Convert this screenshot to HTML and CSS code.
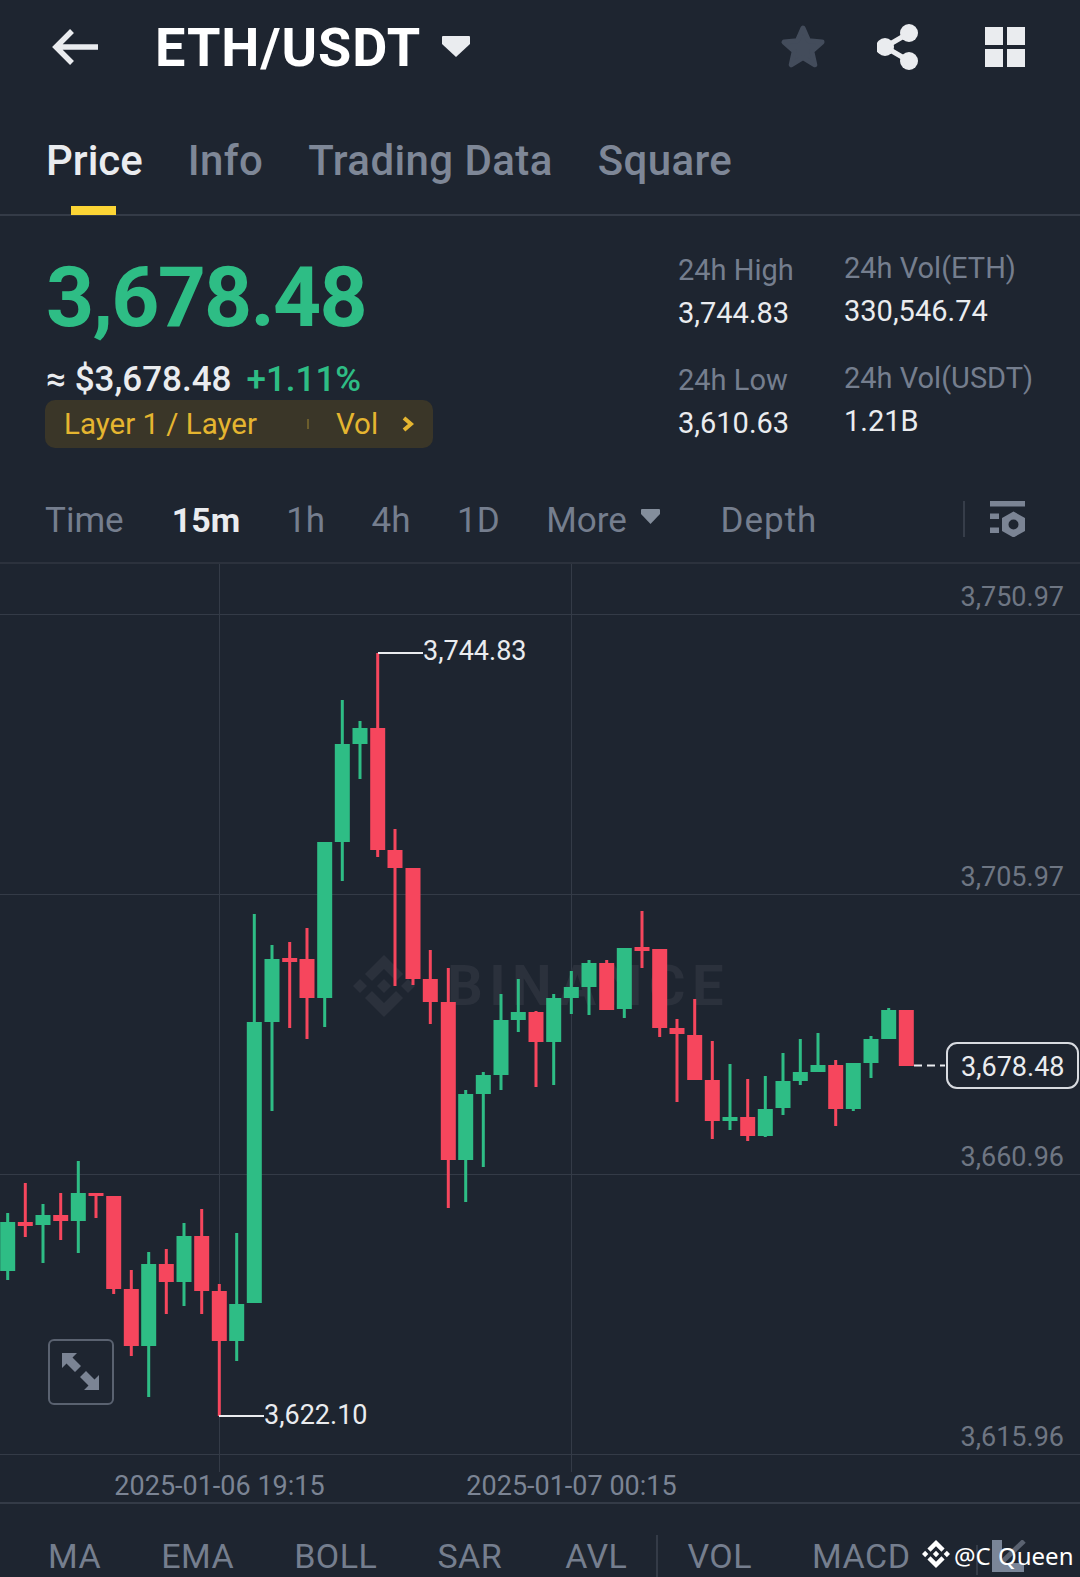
FILE: index.html
```html
<!DOCTYPE html>
<html>
<head>
    <title>ETH/USDT</title>
    <link rel="stylesheet" href="styles.css">
</head>
<body>
    <svg class="hidden-defs" width="0" height="0">
        <symbol id="bnb-logo" viewBox="0 0 32 32">
            <path d="M9.79 13.44 16 7.23l6.21 6.22 3.61-3.61L16 0 6.18 9.82z"/>
            <path d="M0 16l3.61-3.61L7.22 16l-3.61 3.61z"/>
            <path d="M9.79 18.56 16 24.77l6.21-6.21 3.61 3.6L16 32l-9.82-9.82z"/>
            <path d="M24.78 16l3.61-3.61L32 16l-3.61 3.61z"/>
            <path d="M19.66 16 16 12.34 12.34 16 16 19.66z"/>
        </symbol>
    </svg>

    <div class="top-bar">
        <svg class="back-icon" width="48" height="40" viewBox="0 0 48 40">
            <path d="M46 20H5M20 4 4 20l16 16"/>
        </svg>
        <div class="pair">ETH/USDT</div>
        <svg class="pair-caret" width="28" height="21" viewBox="0 0 28 21">
            <path d="M1 0h26a1 1 0 0 1 1 1v7L14 21 0 8V1a1 1 0 0 1 1-1z"/>
        </svg>
        <div class="top-icons">
            <svg width="46" height="46" viewBox="0 0 46 46">
                <path class="star" d="M23 4l5.6 12.8 13.4 1.3-10.2 9.1 3 13.6L23 33.7 11.200 40.800l3-13.600L4 18.100l13.400-1.300z"/>
            </svg>
            <svg width="44" height="46" viewBox="0 0 44 46">
                <path class="share-line" d="M32 9 8 23l24 14"/>
                <circle class="icon-fill" cx="32" cy="9" r="9"/>
                <circle class="icon-fill" cx="8" cy="23" r="9"/>
                <circle class="icon-fill" cx="32" cy="37" r="9"/>
            </svg>
            <svg class="grid-icon" width="40" height="40" viewBox="0 0 40 40">
                <path class="icon-fill" d="M0 0h18v18H0zM22 0h18v18H22zM0 22h18v18H0zM22 22h18v18H22z"/>
            </svg>
        </div>
    </div>

    <div class="tabs">
        <div class="tab active">Price</div>
        <div class="tab">Info</div>
        <div class="tab">Trading Data</div>
        <div class="tab">Square</div>
    </div>

    <div class="ticker">
        <div class="ticker-left">
            <div class="last-price">3,678.48</div>
            <div class="price-sub">
                <span class="usd">≈ $3,678.48</span>
                <span class="change">+1.11%</span>
            </div>
            <div class="tag-pill">
                <span class="tag-name">Layer 1 / Layer</span>
                <span class="tag-sep"></span>
                <span class="tag-vol">Vol</span>
                <svg class="tag-arrow" width="12" height="16" viewBox="0 0 12 16">
                    <path d="M2 2l7 6-7 6"/>
                </svg>
            </div>
        </div>
        <div class="stats">
            <div class="stat">
                <div class="stat-label">24h High</div>
                <div class="stat-value">3,744.83</div>
            </div>
            <div class="stat">
                <div class="stat-label">24h Vol(ETH)</div>
                <div class="stat-value">330,546.74</div>
            </div>
            <div class="stat">
                <div class="stat-label">24h Low</div>
                <div class="stat-value">3,610.63</div>
            </div>
            <div class="stat">
                <div class="stat-label">24h Vol(USDT)</div>
                <div class="stat-value">1.21B</div>
            </div>
        </div>
    </div>

    <div class="intervals">
        <span class="interval time">Time</span>
        <span class="interval selected">15m</span>
        <span class="interval">1h</span>
        <span class="interval">4h</span>
        <span class="interval">1D</span>
        <span class="interval more">More
            <svg width="19" height="15" viewBox="0 0 20 15" preserveAspectRatio="none">
                <path d="M1 0h18a1 1 0 0 1 1 1v4L10 15 0 5V1a1 1 0 0 1 1-1z"/>
            </svg>
        </span>
        <span class="interval depth">Depth</span>
        <span class="interval-sep"></span>
        <svg class="chart-settings" width="36" height="36" viewBox="0 0 36 36">
            <path d="M0 0h35v5.500H0zM0 12.500h9V18H0zM0 26.500h9V32H0z"/>
            <path fill-rule="evenodd" d="M23.500 10.500 35 17v13l-11.500 6.500L12 30V17zM23.500 18.500a5 5 0 1 0 0 10 5 5 0 0 0 0-10z"/>
        </svg>
    </div>

    <div class="chart">
        <svg class="chart-svg" width="1080" height="938" viewBox="0 564 1080 938">
            <g class="grid">
                <path d="M0 614.500H1080M0 894.500H1080M0 1174.500H1080M0 1454.500H1080M219.500 564V1472M571.500 564V1472"/>
            </g>
            <use href="#bnb-logo" class="wm-logo" x="353" y="955" width="62" height="62"/>
            <text class="wm-text" x="447" y="1005">BINANCE</text>
            <g id="candles"></g>

            <text class="axis-price" x="1064" y="606">3,750.97</text>
            <text class="axis-price" x="1064" y="886">3,705.97</text>
            <text class="axis-price" x="1064" y="1166">3,660.96</text>
            <text class="axis-price" x="1064" y="1446">3,615.96</text>

            <text class="axis-date" x="219.500" y="1495">2025-01-06 19:15</text>
            <text class="axis-date" x="571.500" y="1495">2025-01-07 00:15</text>

            <path class="mark-line" d="M378 653H423M219 1416H264"/>
            <text class="mark-text" x="423" y="660">3,744.83</text>
            <text class="mark-text" x="264" y="1424">3,622.10</text>

            <path class="last-dash" d="M914 1065.500H945"/>
            <rect class="last-box" x="947" y="1043" width="131" height="45" rx="10"/>
            <text class="mark-text" x="961" y="1076">3,678.48</text>
        </svg>
        <div class="expand-btn">
            <svg width="38" height="38" viewBox="0 0 38 38">
                <path d="M0 0h15l-4.500 4.500 8.500 8.500-6 6-8.500-8.500L0 15zM37 37H22l4.500-4.500-8.500-8.500 6-6 8.500 8.500L37 22z"/>
            </svg>
        </div>
    </div>

    <div class="indicators">
        <span class="ind">MA</span>
        <span class="ind">EMA</span>
        <span class="ind">BOLL</span>
        <span class="ind">SAR</span>
        <span class="ind ind-avl">AVL</span>
        <span class="ind-sep"></span>
        <span class="ind">VOL</span>
        <span class="ind">MACD</span>

        <div class="credit">
            <svg class="credit-logo" width="28" height="28"><use href="#bnb-logo"/></svg>
            <span class="credit-sep"></span>
            <svg class="credit-mark" width="34" height="32" viewBox="0 0 34 32">
                <path d="M0 0h10v23h22v9H0z"/>
                <path class="credit-check" d="M10 22 32 1"/>
            </svg>
            <span class="credit-text">@C Queen</span>
        </div>
    </div>

    <script src="chart.js"></script>
</body>
</html>
```
FILE: styles.css
```css
* {
    box-sizing: border-box;
}

body {
    margin: 0;
    width: 1080px;
    height: 1577px;
    overflow: hidden;
    background-color: #1e2530;
    color: #eaecef;
    font-family: Roboto, "Noto Sans", sans-serif;
}

.hidden-defs {
    display: block;
    height: 0;
}

/* Top bar */
.top-bar {
    height: 94px;
    display: flex;
    align-items: center;
    padding: 0 55px 0 52px;
}

.back-icon {
    fill: none;
    stroke: #eaecef;
    stroke-width: 5.5;
}

.pair {
    margin-left: 55px;
    font-size: 54px;
    letter-spacing: 1px;
    font-weight: 700;
    color: #fff;
}

.pair-caret {
    margin-left: 21px;
    margin-top: -2px;
    fill: #eaecef;
}

.top-icons {
    margin-left: auto;
    display: flex;
    align-items: center;
    gap: 51px;
}

.grid-icon {
    margin-left: 13px;
}

.star {
    fill: #434c5b;
    stroke: #434c5b;
    stroke-width: 5;
    stroke-linejoin: round;
}

.share-line {
    fill: none;
    stroke: #eaecef;
    stroke-width: 5;
}

.icon-fill {
    fill: #eaecef;
}

/* Tabs */
.tabs {
    height: 122px;
    display: flex;
    gap: 45px;
    padding: 43px 0 0 46px;
    border-bottom: 2px solid #343b47;
}

.tab {
    position: relative;
    height: 48px;
    font-size: 42px;
    line-height: 48px;
    letter-spacing: 0.4px;
    font-weight: 500;
    color: #7e8797;
}

.tab.active {
    letter-spacing: 0;
    color: #eaecef;
}

.tab.active::after {
    content: "";
    position: absolute;
    left: 25px;
    top: 69px;
    width: 45px;
    height: 9px;
    background-color: #fcd535;
}

/* Price block */
.ticker {
    height: 274px;
    display: flex;
    justify-content: space-between;
    padding: 0 46px 0 46px;
}

.ticker-left {
    display: flex;
    flex-direction: column;
}

.last-price {
    margin-top: 36px;
    font-size: 84px;
    line-height: 92px;
    letter-spacing: -1.8px;
    font-weight: 700;
    color: #2ebd85;
}

.price-sub {
    margin-top: 16px;
    display: flex;
    gap: 15px;
    font-size: 35px;
    line-height: 40px;
    font-weight: 500;
}

.change {
    color: #2ebd85;
}

.tag-pill {
    margin-top: 0;
    margin-left: -1px;
    width: 388px;
    height: 48px;
    display: flex;
    align-items: center;
    padding: 0 0 0 19px;
    border-radius: 10px;
    background-color: #3a3628;
    color: #e5b530;
    font-size: 29.5px;
}

.tag-name {
    width: 243px;
}

.tag-sep {
    width: 2px;
    height: 10px;
    background-color: #6b5d2c;
}

.tag-vol {
    margin-left: 27px;
}

.tag-arrow {
    margin-left: 24px;
    fill: none;
    stroke: #e5b530;
    stroke-width: 4;
}

.stats {
    width: 356px;
    display: grid;
    grid-template-columns: 166px 190px;
    grid-auto-rows: 110px;
    padding-top: 35px;
}

.stat {
    white-space: nowrap;
}

.stat:nth-child(even) {
    margin-top: -2px;
}

.stat-label {
    font-size: 29px;
    line-height: 38px;
    color: #757e8e;
}

.stat-value {
    margin-top: 5px;
    font-size: 29px;
    line-height: 38px;
    color: #eaecef;
}

/* Interval row */
.intervals {
    height: 74px;
    display: flex;
    align-items: center;
    padding-left: 45px;
    padding-bottom: 12px;
    border-bottom: 2px solid #2c323d;
    font-size: 35px;
    color: #757e8e;
}

.interval {
    margin-right: 46.5px;
    white-space: nowrap;
}

.interval.time {
    margin-right: 48px;
}

.interval.selected {
    margin-right: 46px;
    font-size: 34px;
    font-weight: 700;
    color: #eaecef;
}

.interval.more {
    margin-right: 60px;
}

.interval.more svg {
    margin-left: 6px;
    margin-bottom: 8px;
    fill: #848e9c;
}

.interval.depth {
    letter-spacing: 1px;
}

.interval-sep {
    margin-left: auto;
    margin-right: -1px;
    margin-top: -2px;
    width: 2px;
    height: 36px;
    background-color: #363d49;
}

.chart-settings {
    margin: -2px 54px 0 26px;
    fill: #7b8494;
}

/* Chart */
.chart {
    position: relative;
    height: 940px;
    border-bottom: 2px solid #343b47;
}

.chart-svg {
    display: block;
}

.grid path {
    fill: none;
    stroke: #343b47;
    stroke-width: 1;
}

.wm-logo {
    fill: #2b313c;
}

.wm-text {
    font-size: 56px;
    font-weight: 700;
    letter-spacing: 6.5px;
    fill: #2b313c;
}

.up {
    fill: #2ebd85;
}

.down {
    fill: #f6465d;
}

.axis-price {
    font-size: 27px;
    text-anchor: end;
    fill: #6e7683;
}

.axis-date {
    font-size: 27px;
    text-anchor: middle;
    fill: #7b8494;
}

.mark-line {
    fill: none;
    stroke: #eaecef;
    stroke-width: 2;
}

.mark-text {
    font-size: 27px;
    fill: #eaecef;
}

.last-dash {
    fill: none;
    stroke: #eaecef;
    stroke-width: 2;
    stroke-dasharray: 8 5;
}

.last-box {
    fill: #1e2530;
    stroke: #d8dbe0;
    stroke-width: 2;
}

.expand-btn {
    position: absolute;
    left: 48px;
    top: 775px;
    width: 66px;
    height: 66px;
    display: flex;
    align-items: center;
    justify-content: center;
    border: 2px solid #5a6270;
    border-radius: 6px;
    fill: #7b8494;
}

/* Indicator row */
.indicators {
    position: relative;
    height: 73px;
    display: flex;
    align-items: center;
    padding: 0 0 0 48px;
    gap: 60px;
    overflow: hidden;
    font-size: 34px;
    letter-spacing: 0.5px;
    color: #757e8e;
}

.ind {
    margin-top: 31px;
    line-height: 40px;
}

.ind-avl {
    margin-left: 3px;
}

.ind-sep {
    width: 2px;
    height: 42px;
    margin: 30px -31px 0 -31px;
    background-color: #343b47;
}

.credit {
    position: absolute;
    left: 922px;
    top: 36px;
    width: 158px;
    height: 36px;
    color: #fff;
}

.credit-logo {
    position: absolute;
    left: 0;
    top: 0;
    fill: #fff;
}

.credit-sep {
    position: absolute;
    left: 54px;
    top: 5px;
    width: 2px;
    height: 30px;
    background-color: #343b47;
}

.credit-mark {
    position: absolute;
    left: 70px;
    top: 0;
    fill: #7a8598;
}

.credit-check {
    fill: none;
    stroke: #5a6270;
    stroke-width: 5;
}

.credit-text {
    position: absolute;
    left: 32px;
    top: -2px;
    font-family: "Noto Sans", sans-serif;
    font-size: 24px;
    letter-spacing: 0;
    word-spacing: 1px;
    line-height: 36px;
    white-space: nowrap;
}
```
FILE: chart.js
```js
// x, wick top, wick bottom, body top, body bottom
const up = [
    [7.7, 1213, 1280, 1222, 1271],
    [43, 1204, 1263, 1215, 1225],
    [78.3, 1161, 1253, 1193, 1221],
    [148.7, 1252, 1397, 1264, 1346],
    [184, 1223, 1306, 1236, 1282],
    [236.7, 1233, 1361, 1304, 1341],
    [254.3, 914, 1303, 1022, 1303],
    [272, 945, 1111, 959, 1022],
    [324.7, 842, 1027, 842, 998],
    [342.3, 700, 881, 744, 842],
    [360, 721, 779, 728, 744],
    [465.7, 1090, 1202, 1094, 1160],
    [483.3, 1072, 1167, 1075, 1094],
    [501, 994, 1090, 1020, 1075],
    [518.3, 979, 1032, 1012, 1020],
    [553.7, 994, 1085, 998, 1042],
    [571.3, 971, 1014, 987, 998],
    [589, 960, 1015, 963, 987],
    [624.3, 948, 1018, 948, 1009],
    [730, 1064, 1130, 1117, 1121],
    [765.3, 1076, 1137, 1109, 1136],
    [783, 1053, 1115, 1081, 1108],
    [800.3, 1039, 1085, 1072, 1081],
    [818, 1033, 1072, 1065, 1072],
    [853.3, 1063, 1111, 1063, 1109],
    [871, 1036, 1078, 1039, 1063],
    [888.7, 1008, 1039, 1010, 1039]
];

const down = [
    [25.3, 1183, 1237, 1222, 1226],
    [60.7, 1193, 1240, 1215, 1221],
    [96, 1193, 1218, 1193, 1196],
    [113.7, 1196, 1294, 1196, 1289],
    [131.3, 1270, 1356, 1289, 1346],
    [166.3, 1249, 1314, 1264, 1282],
    [201.7, 1209, 1314, 1236, 1291],
    [219.3, 1284, 1416, 1291, 1341],
    [289.7, 942, 1028, 958, 962],
    [307, 928, 1039, 959, 998],
    [377.7, 653, 857, 728, 850],
    [395, 829, 986, 850, 868],
    [413, 868, 985, 868, 979],
    [430.3, 950, 1024, 979, 1002],
    [448.3, 968, 1208, 1002, 1160],
    [536, 1011, 1087, 1012, 1042],
    [606.7, 960, 1010, 963, 1010],
    [642, 911, 968, 947, 951],
    [659.7, 949, 1037, 949, 1028],
    [677, 1019, 1102, 1028, 1034],
    [694.7, 999, 1080, 1035, 1080],
    [712.3, 1041, 1139, 1080, 1121],
    [747.7, 1079, 1141, 1117, 1136],
    [835.7, 1060, 1126, 1065, 1109],
    [906.3, 1010, 1066, 1010, 1066]
];

const candles = document.getElementById("candles");

function addRect(x, y, width, height, className) {
    const rect = document.createElementNS("http://www.w3.org/2000/svg", "rect");
    rect.setAttribute("x", x);
    rect.setAttribute("y", y);
    rect.setAttribute("width", width);
    rect.setAttribute("height", height);
    rect.setAttribute("class", className);
    candles.appendChild(rect);
}

function drawCandles(list, className) {
    list.forEach((c) => {
        addRect(c[0] - 1.5, c[1], 3, c[2] - c[1], className);
        addRect(c[0] - 7.5, c[3], 15, c[4] - c[3], className);
    });
}

drawCandles(up, "up");
drawCandles(down, "down");
```
